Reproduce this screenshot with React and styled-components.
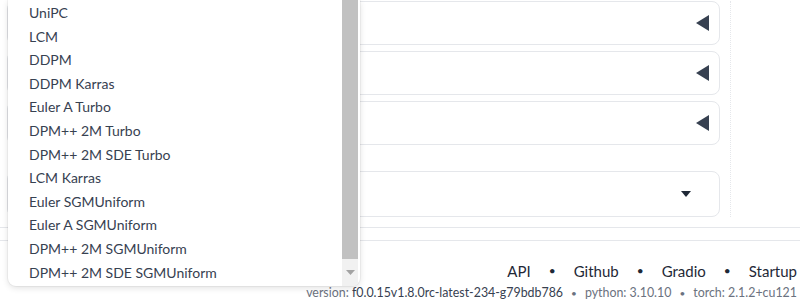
import styled, { createGlobalStyle } from "styled-components";

const samplers = [
  "UniPC",
  "LCM",
  "DDPM",
  "DDPM Karras",
  "Euler A Turbo",
  "DPM++ 2M Turbo",
  "DPM++ 2M SDE Turbo",
  "LCM Karras",
  "Euler SGMUniform",
  "Euler A SGMUniform",
  "DPM++ 2M SGMUniform",
  "DPM++ 2M SDE SGMUniform",
];

const Global = createGlobalStyle`
  html, body {
    margin: 0;
    padding: 0;
    background: #ffffff;
  }
  body {
    font-family: Lato, "Liberation Sans", sans-serif;
    color: #374151;
    overflow: hidden;
  }
`;

export default function App() {
  return (
    <Page>
      <Global />
      <Main>
        <Column>
          <Accordion>
            <Caret />
          </Accordion>
          <Accordion>
            <Caret />
          </Accordion>
          <Accordion>
            <Caret />
          </Accordion>
          <SelectBox>
            <DownArrow />
          </SelectBox>
        </Column>
        <Side />
      </Main>
      <Rule />
      <Footer>
        <Links>
          <a>API</a>
          <Dot>•</Dot>
          <a>Github</a>
          <Dot>•</Dot>
          <a>Gradio</a>
          <Dot>•</Dot>
          <a>Startup</a>
        </Links>
        <Versions>
          <span>version: </span>
          <b>f0.0.15v1.8.0rc-latest-234-g79bdb786</b>
          <Sep>•</Sep>
          <span>python: 3.10.10</span>
          <Sep>•</Sep>
          <span>torch: 2.1.2+cu121</span>
        </Versions>
      </Footer>

      <Dropdown>
        <Options>
          {samplers.map((s) => (
            <Option key={s}>{s}</Option>
          ))}
        </Options>
        <Scrollbar>
          <Thumb />
          <ScrollArrow>
            <svg width="9" height="5" viewBox="0 0 9 5">
              <polygon points="0,0 9,0 4.5,5" fill="#a3a3a3" />
            </svg>
          </ScrollArrow>
        </Scrollbar>
      </Dropdown>
    </Page>
  );
}

function Caret() {
  return (
    <CaretIcon width="14" height="16" viewBox="0 0 14 16">
      <polygon points="13,0 13,16 0,8" fill="#374151" />
    </CaretIcon>
  );
}

function DownArrow() {
  return (
    <ArrowIcon width="10" height="6" viewBox="0 0 10 6">
      <polygon points="0,0 10,0 5,6" fill="#1f2937" />
    </ArrowIcon>
  );
}

const Page = styled.div`
  position: relative;
  width: 800px;
  height: 305px;
  overflow: hidden;
`;

const Main = styled.div`
  display: flex;
  padding: 1px 0 0 7px;
  height: 226px;
  box-sizing: border-box;
`;

const Column = styled.div`
  width: 713px;
  padding-right: 10px;
  border-right: 1px dotted #e5e7eb;
  display: flex;
  flex-direction: column;
  gap: 6px;
  height: 216px;
`;

const Side = styled.div`
  flex: 1;
`;

const Accordion = styled.div`
  height: 44px;
  box-sizing: border-box;
  border: 1px solid #e5e7eb;
  border-radius: 8px;
  display: flex;
  align-items: center;
  justify-content: flex-end;
  padding-right: 9px;
`;

const CaretIcon = styled.svg`
  display: block;
`;

const SelectBox = styled.div`
  margin-top: 20px;
  height: 46px;
  box-sizing: border-box;
  border: 1px solid #e5e7eb;
  border-radius: 8px;
  display: flex;
  align-items: center;
  justify-content: flex-end;
  padding-right: 28px;
`;

const ArrowIcon = styled.svg`
  display: block;
`;

const Rule = styled.div`
  height: 12px;
  border-top: 1px solid #e5e7eb;
  border-bottom: 1px solid #e5e7eb;
  margin-top: 1px;
`;

const Footer = styled.div`
  display: flex;
  flex-direction: column;
  align-items: flex-end;
  padding: 20px 3px 0 0;
`;

const Links = styled.div`
  display: flex;
  align-items: center;
  gap: 18px;
  font-size: 15px;
  color: #1f2937;
  line-height: 20px;
  a {
    color: inherit;
  }
`;

const Dot = styled.span`
  font-size: 12px;
`;

const Versions = styled.div`
  margin-top: 3px;
  font-size: 12.4px;
  line-height: 17px;
  color: #6b7280;
  white-space: nowrap;
  b {
    font-weight: 400;
    color: #374151;
  }
`;

const Sep = styled.span`
  margin: 0 8px;
  font-size: 10px;
`;

const Dropdown = styled.div`
  position: absolute;
  left: 8px;
  top: 0;
  width: 352px;
  height: 286px;
  display: flex;
  background: #ffffff;
  border-radius: 0 0 8px 8px;
  box-shadow: 0 2px 6px rgba(0, 0, 0, 0.12), 0 0 0 1px rgba(0, 0, 0, 0.04);
  overflow: hidden;
`;

const Options = styled.ul`
  flex: 1;
  list-style: none;
  margin: 0;
  padding: 1px 0 0 21px;
`;

const Option = styled.li`
  height: 23.6px;
  line-height: 23.6px;
  font-size: 14px;
  color: #374151;
  white-space: nowrap;
`;

const Scrollbar = styled.div`
  width: 16px;
  margin-right: 2px;
  display: flex;
  flex-direction: column;
  background: #f1f1f1;
`;

const Thumb = styled.div`
  height: 259px;
  background: #c1c1c1;
`;

const ScrollArrow = styled.div`
  flex: 1;
  display: flex;
  align-items: center;
  justify-content: center;
  background: #f1f1f1;
`;
